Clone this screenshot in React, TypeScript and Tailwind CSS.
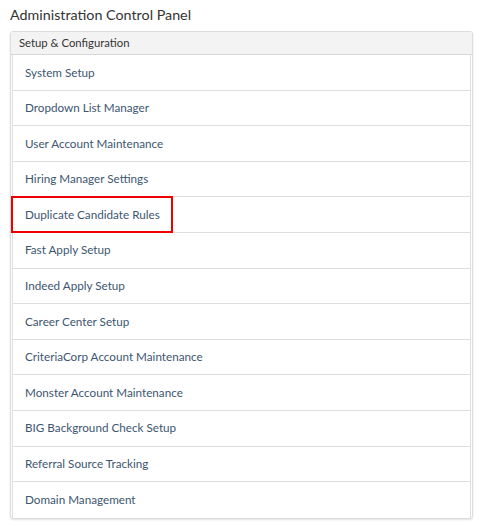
const ITEMS = [
  "System Setup",
  "Dropdown List Manager",
  "User Account Maintenance",
  "Hiring Manager Settings",
  "Duplicate Candidate Rules",
  "Fast Apply Setup",
  "Indeed Apply Setup",
  "Career Center Setup",
  "CriteriaCorp Account Maintenance",
  "Monster Account Maintenance",
  "BIG Background Check Setup",
  "Referral Source Tracking",
  "Domain Management",
];

const HIGHLIGHT = "Duplicate Candidate Rules";

export default function App() {
  return (
    <div className="w-[480px] h-[526px] bg-white font-['Lato',sans-serif] pt-[5px] px-[10px]">
      <h1 className="text-[14.3px] leading-[20px] text-[#333333] mb-[6px]">Administration Control Panel</h1>

      <div className="w-[463px] border border-[#dcdcdc] rounded-[3px] shadow-[0_1px_2px_rgba(0,0,0,0.12)]">
        <div className="h-[23px] bg-[#f3f3f3] border-b border-[#d8d8d8] px-[8px] flex items-center text-[11.3px] text-[#333333]">
          Setup &amp; Configuration
        </div>
        <ul className="ml-px mr-px">
          {ITEMS.map((item, i) => (
            <li
              key={item}
              className={
                "relative h-[35.6px] flex items-center px-[12px] text-[11.7px] text-[#3d5670] border-l border-r border-[#dedede] " +
                (i < ITEMS.length - 1 ? "border-b" : "")
              }
            >
              {item === HIGHLIGHT && (
                <span className="absolute left-[-2px] top-[-1px] w-[162px] h-[37px] border-2 border-[#ee0000]" />
              )}
              {item}
            </li>
          ))}
        </ul>
      </div>
    </div>
  );
}
